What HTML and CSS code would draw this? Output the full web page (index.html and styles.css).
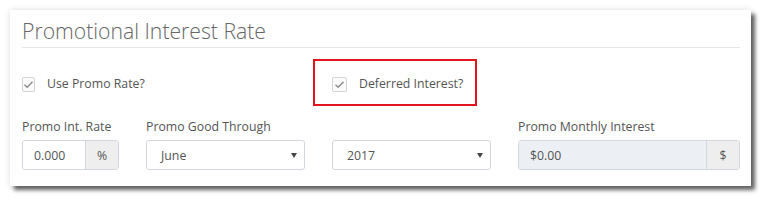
FILE: index.html
```html
<!DOCTYPE html>
<html lang="en">
<head>
    <meta charset="UTF-8">
    <title>Promotional Interest Rate</title>
    <link rel="stylesheet" href="styles.css">
</head>
<body>
    <div class="panel">
        <h2 class="panel-title">Promotional Interest Rate</h2>

        <div class="form-row check-row">
            <label class="check">
                <span class="check-box">
                    <svg width="11" height="9" viewBox="0 0 11 9"><path d="M1.5 4.8 L4.2 7.2 L9.5 1.8" fill="none" stroke="#8a8a8a" stroke-width="1.4"/></svg>
                </span>
                Use Promo Rate?
            </label>
            <span></span>
            <label class="check highlight">
                <span class="check-box">
                    <svg width="11" height="9" viewBox="0 0 11 9"><path d="M1.5 4.8 L4.2 7.2 L9.5 1.8" fill="none" stroke="#8a8a8a" stroke-width="1.4"/></svg>
                </span>
                Deferred Interest?
            </label>
        </div>

        <div class="form-row field-row">
            <div class="field">
                <label class="field-label">Promo Int. Rate</label>
                <div class="input-group">
                    <span class="input">0.000</span>
                    <span class="addon">%</span>
                </div>
            </div>
            <div class="field">
                <label class="field-label">Promo Good Through</label>
                <div class="select">
                    <span>June</span>
                    <span class="caret"></span>
                </div>
            </div>
            <div class="field">
                <label class="field-label">&nbsp;</label>
                <div class="select">
                    <span>2017</span>
                    <span class="caret"></span>
                </div>
            </div>
            <div class="field">
                <label class="field-label">Promo Monthly Interest</label>
                <div class="input-group">
                    <span class="input readonly">$0.00</span>
                    <span class="addon">$</span>
                </div>
            </div>
        </div>
    </div>
</body>
</html>
```

FILE: styles.css
```css
body {
    margin: 0;
    padding: 10px 0 18px 10px;
    font-family: "Open Sans", Arial, sans-serif;
    background-color: #fff;
    color: #555;
}

.panel {
    width: 741px;
    height: 176px;
    box-sizing: border-box;
    padding: 0 11px 0 12px;
    background-color: #fff;
    box-shadow: 4px 4px 4px rgba(0, 0, 0, 0.6), 0 0 7px rgba(0, 0, 0, 0.12);
}

.panel-title {
    margin: 0;
    padding: 6px 0 1px;
    font-size: 21.2px;
    font-weight: 300;
    line-height: 30px;
    color: #666;
    border-bottom: 1px solid #e6e6e6;
}

.form-row {
    display: grid;
    grid-template-columns: 97px 159px 159px 1fr;
    column-gap: 27px;
}

.check-row {
    margin-top: 27px;
}

.check {
    display: flex;
    align-items: center;
    gap: 12px;
    font-size: 12.3px;
    line-height: 18px;
    color: #555;
    white-space: nowrap;
}

.check-box {
    width: 15px;
    height: 15px;
    box-sizing: border-box;
    border: 1px solid #d4d4d4;
    border-radius: 2px;
    background-color: #fbfbfb;
    display: flex;
    align-items: center;
    justify-content: center;
}

.highlight {
    position: relative;
}

.highlight::after {
    content: "";
    position: absolute;
    left: -19px;
    top: -16px;
    width: 164px;
    height: 47px;
    box-sizing: border-box;
    border: 2px solid #e3141b;
}

.field-row {
    margin-top: 25px;
}

.field-label {
    display: block;
    font-size: 12.3px;
    line-height: 18px;
    margin-bottom: 4px;
    color: #555;
    white-space: nowrap;
}

.input-group {
    display: flex;
    height: 30px;
    box-sizing: border-box;
    border: 1px solid #d3d8df;
    border-radius: 3px;
    overflow: hidden;
    font-size: 12.3px;
}

.input {
    flex: 1;
    display: flex;
    align-items: center;
    padding-left: 11px;
    background-color: #fff;
    color: #555;
}

.input.readonly {
    background-color: #eceff4;
}

.addon {
    width: 32px;
    display: flex;
    align-items: center;
    justify-content: center;
    background-color: #eee;
    border-left: 1px solid #d3d8df;
    color: #555;
}

.select {
    height: 30px;
    box-sizing: border-box;
    border: 1px solid #d3d8df;
    border-radius: 3px;
    display: flex;
    align-items: center;
    justify-content: space-between;
    padding: 0 7px 0 14px;
    font-size: 12.3px;
    color: #555;
}

.caret {
    width: 0;
    height: 0;
    border-left: 3px solid transparent;
    border-right: 3px solid transparent;
    border-top: 5px solid #444;
}
```
